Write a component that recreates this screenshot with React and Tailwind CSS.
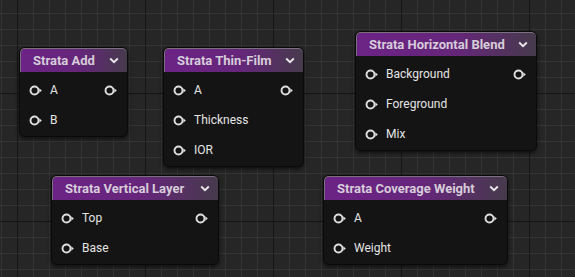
import React from "react";

const nodes = [
  { title: "Strata Add", x: 19, y: 47, w: 109, inputs: ["A", "B"] },
  { title: "Strata Thin-Film", x: 163, y: 47, w: 141, inputs: ["A", "Thickness", "IOR"] },
  { title: "Strata Horizontal Blend", x: 355, y: 31, w: 182, inputs: ["Background", "Foreground", "Mix"] },
  { title: "Strata Vertical Layer", x: 51, y: 175, w: 168, inputs: ["Top", "Base"] },
  { title: "Strata Coverage Weight", x: 323, y: 175, w: 185, inputs: ["A", "Weight"] },
];

const Pin = () => (
  <svg width="13" height="11" viewBox="0 0 13 11" className="shrink-0">
    <circle cx="5.5" cy="5.5" r="4" fill="none" stroke="#dedede" strokeWidth="1.9" />
    <polygon points="10.3,3.3 12.8,5.5 10.3,7.7" fill="#dedede" />
  </svg>
);

const Chevron = () => (
  <svg width="10" height="7" viewBox="0 0 10 7">
    <polyline points="1.2,1.5 5,5.2 8.8,1.5" fill="none" stroke="#e8e8e8" strokeWidth="1.9" />
  </svg>
);

const Node = ({ title, x, y, w, inputs }) => (
  <div
    className="absolute rounded-[6px] border border-[#0a0a0a] bg-[#141414] shadow-[0_2px_4px_rgba(0,0,0,0.6)]"
    style={{ left: x, top: y, width: w }}
  >
    <div className="flex h-[24px] items-center justify-between rounded-t-[5px] border-t border-l border-[#7a7080] bg-[linear-gradient(to_right,#6c2385,#65267a_55%,#463a4c)] pl-[12px] pr-[8px]">
      <span className="text-[13px] font-bold text-[#d6ccd9]">{title}</span>
      <Chevron />
    </div>
    <div className="pt-[3px] pb-[1px]">
      {inputs.map((label, i) => (
        <div key={label} className="flex h-[30px] items-center justify-between pl-[9px] pr-[10px]">
          <div className="flex items-center gap-[8px]">
            <Pin />
            <span className="text-[12px] text-[#e4e4e4]">{label}</span>
          </div>
          {i === 0 && <Pin />}
        </div>
      ))}
    </div>
  </div>
);

export default function App() {
  return (
    <div
      className="relative h-[277px] w-[575px] overflow-hidden bg-[#262626] bg-[image:linear-gradient(to_right,#161616_1px,transparent_1px),linear-gradient(to_bottom,#161616_1px,transparent_1px),linear-gradient(to_right,#343434_1px,transparent_1px),linear-gradient(to_bottom,#343434_1px,transparent_1px)] bg-[size:128px_128px,128px_128px,16px_16px,16px_16px] bg-[position:17px_0,0_93px,1px_0,0_13px]"
      style={{ fontFamily: "Roboto, 'Liberation Sans', sans-serif" }}
    >
      {nodes.map((n) => (
        <Node key={n.title} {...n} />
      ))}
    </div>
  );
}
